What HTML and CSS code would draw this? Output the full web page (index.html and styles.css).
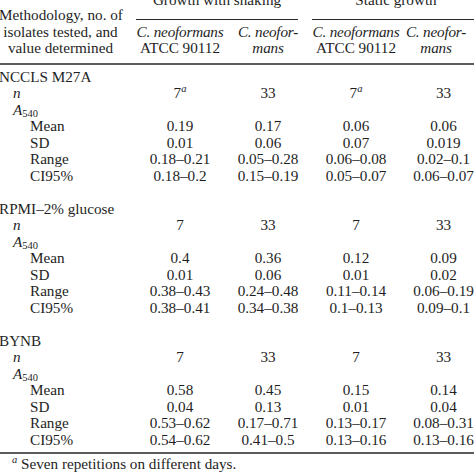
FILE: index.html
```html
<!DOCTYPE html>
<html>
<head>
<meta charset="utf-8">
<link rel="stylesheet" href="styles.css">
</head>
<body>
<div class="sheet">
<table class="data">
  <colgroup>
    <col class="c-label"><col class="c-val"><col class="c-val"><col class="c-val"><col class="c-last">
  </colgroup>
  <thead>
    <tr>
      <th class="head-label" rowspan="2">Methodology, no. of<br>isolates tested, and<br>value determined</th>
      <th class="group" colspan="2"><div class="group-title first">Growth with shaking</div></th>
      <th class="group" colspan="2"><div class="group-title">Static growth</div></th>
    </tr>
    <tr class="sub-head">
      <th><i class="sp">C. neoformans</i><br>ATCC 90112</th>
      <th><i class="sp">C. neofor-<br>mans</i></th>
      <th><i class="sp">C. neoformans</i><br>ATCC 90112</th>
      <th class="h-last"><i class="sp">C. neofor-<br>mans</i></th>
    </tr>
  </thead>
  <tbody>
    <tr class="top-row"><td class="sect">NCCLS M27A</td><td></td><td></td><td></td><td></td></tr>
    <tr><td class="l1"><i>n</i></td><td>7<sup>a</sup></td><td>33</td><td>7<sup>a</sup></td><td class="v-last">33</td></tr>
    <tr><td class="l1"><i>A</i><sub>540</sub></td><td></td><td></td><td></td><td></td></tr>
    <tr><td class="l2">Mean</td><td>0.19</td><td>0.17</td><td>0.06</td><td class="v-last">0.06</td></tr>
    <tr><td class="l2">SD</td><td>0.01</td><td>0.06</td><td>0.07</td><td class="v-last">0.019</td></tr>
    <tr><td class="l2">Range</td><td>0.18–0.21</td><td>0.05–0.28</td><td>0.06–0.08</td><td class="v-last">0.02–0.1</td></tr>
    <tr><td class="l2">CI95%</td><td>0.18–0.2</td><td>0.15–0.19</td><td>0.05–0.07</td><td class="v-last">0.06–0.07</td></tr>
    <tr class="blank"><td></td><td></td><td></td><td></td><td></td></tr>
    <tr><td class="sect">RPMI–2% glucose</td><td></td><td></td><td></td><td></td></tr>
    <tr><td class="l1"><i>n</i></td><td>7</td><td>33</td><td>7</td><td class="v-last">33</td></tr>
    <tr><td class="l1"><i>A</i><sub>540</sub></td><td></td><td></td><td></td><td></td></tr>
    <tr><td class="l2">Mean</td><td>0.4</td><td>0.36</td><td>0.12</td><td class="v-last">0.09</td></tr>
    <tr><td class="l2">SD</td><td>0.01</td><td>0.06</td><td>0.01</td><td class="v-last">0.02</td></tr>
    <tr><td class="l2">Range</td><td>0.38–0.43</td><td>0.24–0.48</td><td>0.11–0.14</td><td class="v-last">0.06–0.19</td></tr>
    <tr><td class="l2">CI95%</td><td>0.38–0.41</td><td>0.34–0.38</td><td>0.1–0.13</td><td class="v-last">0.09–0.1</td></tr>
    <tr class="blank"><td></td><td></td><td></td><td></td><td></td></tr>
    <tr><td class="sect">BYNB</td><td></td><td></td><td></td><td></td></tr>
    <tr><td class="l1"><i>n</i></td><td>7</td><td>33</td><td>7</td><td class="v-last">33</td></tr>
    <tr><td class="l1"><i>A</i><sub>540</sub></td><td></td><td></td><td></td><td></td></tr>
    <tr><td class="l2">Mean</td><td>0.58</td><td>0.45</td><td>0.15</td><td class="v-last">0.14</td></tr>
    <tr><td class="l2">SD</td><td>0.04</td><td>0.13</td><td>0.01</td><td class="v-last">0.04</td></tr>
    <tr><td class="l2">Range</td><td>0.53–0.62</td><td>0.17–0.71</td><td>0.13–0.17</td><td class="v-last">0.08–0.31</td></tr>
    <tr class="last-row"><td class="l2">CI95%</td><td>0.54–0.62</td><td>0.41–0.5</td><td>0.13–0.16</td><td class="v-last">0.13–0.16</td></tr>
  </tbody>
</table>
<p class="foot"><sup>a</sup> Seven repetitions on different days.</p>
</div>
</body>
</html>
```

FILE: styles.css
```css
html, body {
  margin: 0;
  padding: 0;
  background: #ffffff;
  overflow: hidden;
}
.sheet {
  margin-top: -8px;
  margin-left: -1px;
  width: 481px;
  font-family: "Liberation Serif", "Times New Roman", serif;
  font-size: 15.2px;
  line-height: 16.5px;
  color: #1e1e1e;
}
.data {
  border-collapse: collapse;
  table-layout: fixed;
  width: 481px;
}
.c-label { width: 137px; }
.c-val { width: 88px; }
.c-last { width: 80px; }
.data th, .data td {
  padding: 0;
  font-weight: normal;
  text-align: center;
  white-space: nowrap;
  vertical-align: bottom;
}
.head-label {
  padding-right: 14px !important;
  padding-bottom: 6px !important;
  border-bottom: 2px solid #5c5c5c;
}
.group-title {
  padding-bottom: 10px;
  border-bottom: 1px solid #2a2a2a;
}
.group-title.first {
  margin-right: 14px;
}
.sub-head th {
  padding-top: 4px;
  padding-bottom: 6px;
  border-bottom: 2px solid #5c5c5c;
}
.sub-head th.h-last {
  padding-right: 8px;
}
.data td.v-last {
  padding-left: 7px;
}
.sp {
  letter-spacing: -0.2px;
}
.data td.sect, .data td.l1, .data td.l2 {
  text-align: left;
}
.l1 { padding-left: 14px !important; }
.l2 { padding-left: 31px !important; }
.top-row td { padding-top: 4px; }
.blank td { height: 16.5px; }
.last-row td {
  padding-bottom: 4px;
  border-bottom: 2px solid #5c5c5c;
}
sub {
  font-size: 10.5px;
  line-height: 0;
  vertical-align: -2px;
}
sup {
  font-size: 10.5px;
  font-style: italic;
  line-height: 0;
  vertical-align: 6px;
}
.foot {
  margin: 0;
  padding: 2px 0 0 13px;
}
```
